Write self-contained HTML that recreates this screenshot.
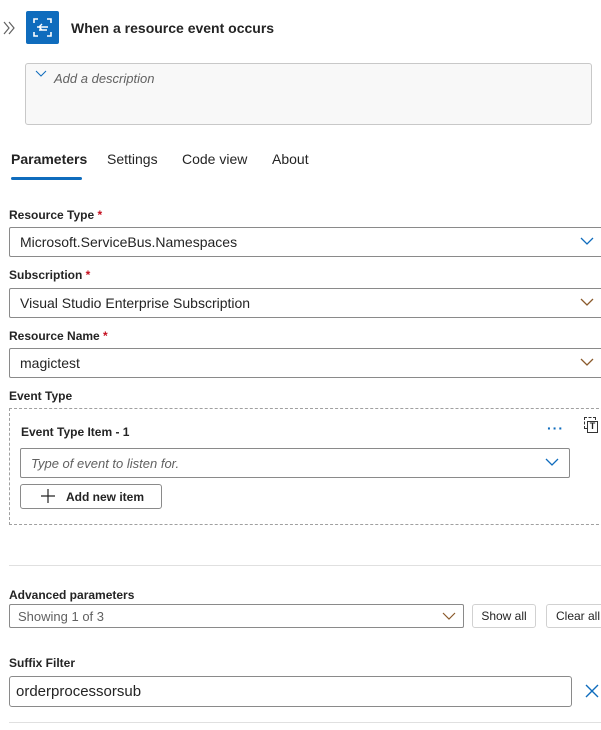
<!DOCTYPE html>
<html><head><style>
*{box-sizing:border-box;margin:0;padding:0}
body{width:601px;height:730px;background:#fff;font-family:"Liberation Sans",sans-serif;color:#242424;position:relative;overflow:hidden;font-size:14px}
.a{position:absolute}
.lbl{font-size:12px;font-weight:bold;color:#242424}
.req{color:#c50f1f}
.dd{position:absolute;border:1px solid #8a8a8a;border-radius:2px;height:30px;font-size:14px;padding:6px 10px;background:#fff}
.chev{position:absolute;right:8px;top:9px}
</style></head><body>
<svg class="a" style="left:3px;top:21px" width="12" height="14" viewBox="0 0 12 14"><path d="M1 1l5 6-5 6M6 1l5 6-5 6" fill="none" stroke="#616161" stroke-width="1.2"/></svg>
<div class="a" style="left:26px;top:11px;width:33px;height:33px;background:#0f6cbd;border-radius:2px"></div>
<svg class="a" style="left:26px;top:11px" width="33" height="33" viewBox="0 0 33 33"><path d="M8 12V8h4M21 8h4v4M25 21v4h-4M12 25H8v-4" fill="none" stroke="#fff" stroke-width="1.6"/><path d="M11 16h11M16 13l-3 3 3 3M13 19h8" fill="none" stroke="#fff" stroke-width="1.4"/></svg>
<div class="a" style="left:71px;top:20px;font-size:14px;font-weight:bold">When a resource event occurs</div>
<div class="a" style="left:25px;top:63px;width:567px;height:62px;border:1px solid #c8c8c8;border-radius:3px;background:#f8f8f8"></div>
<svg class="a" style="left:35px;top:70px" width="12" height="7"><path d="M1 1l5 5 5-5" fill="none" stroke="#0f6cbd" stroke-width="1"/></svg>
<div class="a" style="left:54px;top:71px;font-size:13px;font-style:italic;color:#616161">Add a description</div>
<div class="a" style="left:11px;top:151px;font-size:14px;font-weight:bold">Parameters</div>
<div class="a" style="left:11px;top:177px;width:71px;height:3px;background:#0f6cbd;border-radius:2px"></div>
<div class="a" style="left:107px;top:151px">Settings</div>
<div class="a" style="left:182px;top:151px">Code view</div>
<div class="a" style="left:272px;top:151px">About</div>
<div class="a lbl" style="left:9px;top:208px">Resource Type <span class="req">*</span></div>
<div class="dd" style="left:9px;top:227px;width:600px">Microsoft.ServiceBus.Namespaces<svg class="chev" style="right:14px" width="14" height="8"><path d="M1 1l6 6 6-6" fill="none" stroke="#0f6cbd" stroke-width="1.3"/></svg></div>
<div class="a lbl" style="left:9px;top:268px">Subscription <span class="req">*</span></div>
<div class="dd" style="left:9px;top:288px;width:600px">Visual Studio Enterprise Subscription<svg class="chev" style="right:14px" width="14" height="8"><path d="M1 1l6 6 6-6" fill="none" stroke="#8a5a2b" stroke-width="1.3"/></svg></div>
<div class="a lbl" style="left:9px;top:329px">Resource Name <span class="req">*</span></div>
<div class="dd" style="left:9px;top:348px;width:600px">magictest<svg class="chev" style="right:14px" width="14" height="8"><path d="M1 1l6 6 6-6" fill="none" stroke="#8a5a2b" stroke-width="1.3"/></svg></div>
<div class="a lbl" style="left:9px;top:389px">Event Type</div>
<div class="a" style="left:9px;top:408px;width:600px;height:117px;border:1px dashed #a0a0a0"></div>
<div class="a lbl" style="left:21px;top:425px">Event Type Item - 1</div>
<div class="a" style="left:547px;top:420px;color:#0f6cbd;font-weight:bold;letter-spacing:1px">···</div>
<div class="a" style="left:584px;top:417px;width:12px;height:12px;border:1px dashed #333"></div>
<div class="a" style="left:587px;top:421px;width:11px;height:12px;border:1.5px solid #333;font-size:9px;font-weight:bold;text-align:center;line-height:9px;background:#fff">T</div>
<div class="dd" style="left:20px;top:448px;width:550px;font-style:italic;color:#616161;font-size:13px;padding-top:7px">Type of event to listen for.<svg class="chev" style="right:10px" width="14" height="8"><path d="M1 1l6 6 6-6" fill="none" stroke="#0f6cbd" stroke-width="1.3"/></svg></div>
<div class="a" style="left:20px;top:484px;width:142px;height:25px;border:1px solid #8a8a8a;border-radius:3px;font-size:12px;font-weight:bold;padding:5px 0 0 45px">Add new item</div>
<svg class="a" style="left:40px;top:488px" width="16" height="16"><path d="M8 1v14M1 8h14" stroke="#242424" stroke-width="1.2"/></svg>
<div class="a" style="left:9px;top:565px;width:592px;height:1px;background:#e0e0e0"></div>
<div class="a lbl" style="left:9px;top:588px">Advanced parameters</div>
<div class="a" style="left:9px;top:604px;width:455px;height:24px;border:1px solid #8a8a8a;border-radius:2px;font-size:13px;color:#616161;padding:4px 8px">Showing 1 of 3</div>
<svg class="a" style="left:442px;top:612px" width="14" height="8"><path d="M1 1l6 6 6-6" fill="none" stroke="#8a5a2b" stroke-width="1.2"/></svg>
<div class="a" style="left:472px;top:604px;width:64px;height:24px;border:1px solid #d1d1d1;border-radius:3px;font-size:12px;text-align:center;line-height:22px">Show all</div>
<div class="a" style="left:546px;top:604px;width:64px;height:24px;border:1px solid #d1d1d1;border-radius:3px;font-size:12px;padding-left:9px;line-height:22px">Clear all</div>
<div class="a lbl" style="left:9px;top:656px">Suffix Filter</div>
<div class="a" style="left:9px;top:676px;width:563px;height:31px;border:1px solid #8a8a8a;border-radius:3px;font-size:15px;padding:6px 6px">orderprocessorsub</div>
<svg class="a" style="left:585px;top:684px" width="14" height="14"><path d="M1 1l12 12M13 1L1 13" stroke="#0f6cbd" stroke-width="1.4"/></svg>
<div class="a" style="left:9px;top:722px;width:592px;height:1px;background:#e0e0e0"></div>
</body></html>
